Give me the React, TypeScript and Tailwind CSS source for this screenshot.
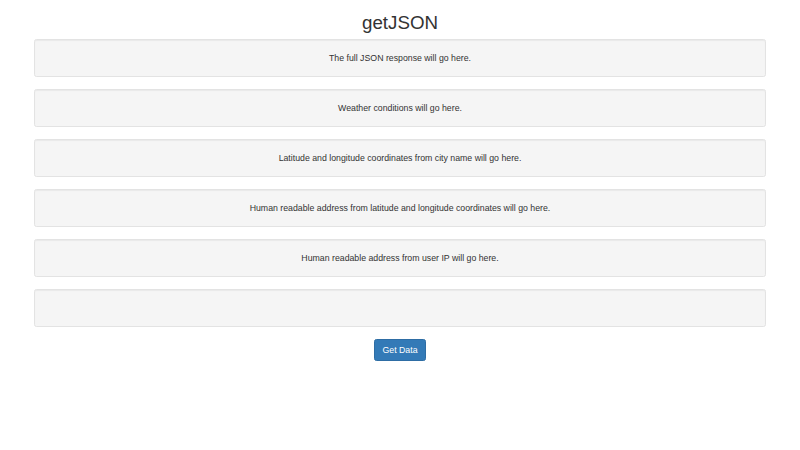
const WELLS = [
  'The full JSON response will go here.',
  'Weather conditions will go here.',
  'Latitude and longitude coordinates from city name will go here.',
  'Human readable address from latitude and longitude coordinates will go here.',
  'Human readable address from user IP will go here.',
  '',
]

export default function App() {
  return (
    <div className="min-h-[450px] bg-white font-['Liberation_Sans',Arial,sans-serif] text-[#333]">
      <div className="mx-[34px] text-center">
        <h2 className="pt-[12.5px] pb-[6.25px] text-[18.75px] leading-[20.6px] font-medium">getJSON</h2>
        {WELLS.map((w, i) => (
          <div
            key={i}
            className="mb-[12px] min-h-[38px] rounded-[2.5px] border border-[#e3e3e3] bg-[#f5f5f5] py-[11.75px] text-[8.75px] leading-[12.5px] shadow-[inset_0_1px_1px_rgba(0,0,0,0.05)]"
          >
            {w}
          </div>
        ))}
        <div className="flex justify-center">
          <button className="h-[22px] rounded-[2.5px] border border-[#2e6da4] bg-[#337ab7] px-[7.5px] text-[8.75px] leading-[12.5px] text-white">
            Get Data
          </button>
        </div>
      </div>
    </div>
  )
}
